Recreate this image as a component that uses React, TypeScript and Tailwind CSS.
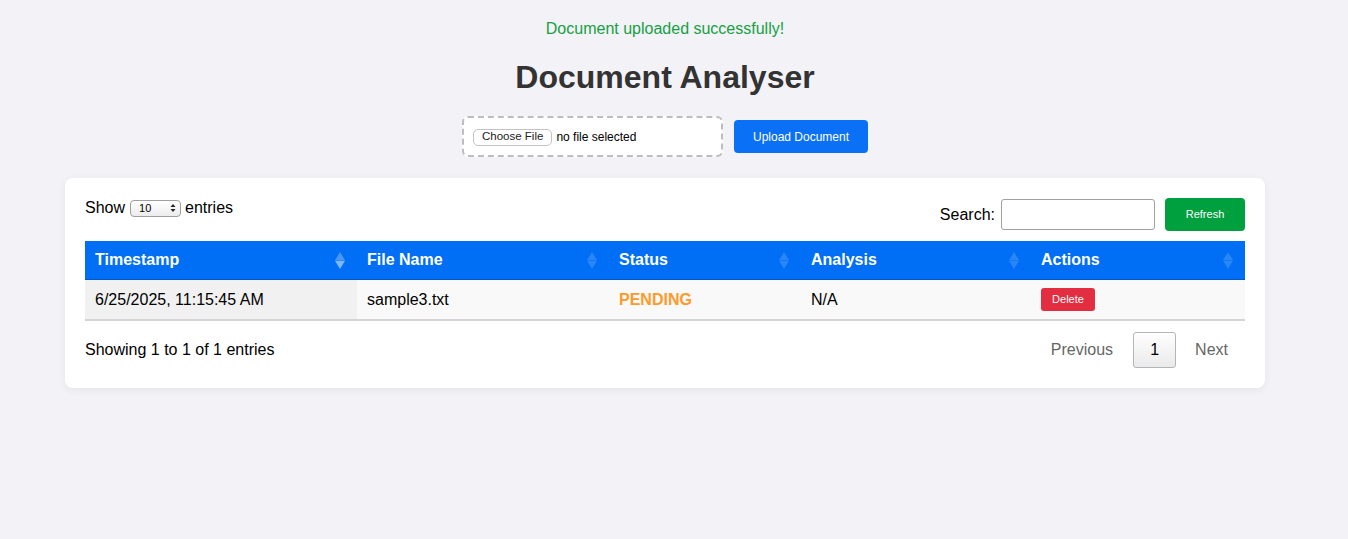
import React from "react";

const columns = [
  { label: "Timestamp", width: "w-[272px]", sorted: true },
  { label: "File Name", width: "w-[252px]", sorted: false },
  { label: "Status", width: "w-[192px]", sorted: false },
  { label: "Analysis", width: "w-[230px]", sorted: false },
  { label: "Actions", width: "w-[214px]", sorted: false },
];

const SortIcon = ({ sorted }: { sorted: boolean }) => (
  <svg width="10" height="17" viewBox="0 0 10 17" className="shrink-0">
    <path d="M5 0 L10 8.3 L0 8.3 Z" fill="#ffffff" fillOpacity={sorted ? 0.28 : 0.16} />
    <path d="M0 8.7 L10 8.7 L5 17 Z" fill="#ffffff" fillOpacity={sorted ? 0.5 : 0.16} />
  </svg>
);

const App = () => {
  return (
    <div className="min-h-screen bg-[#f2f2f7] font-['Liberation_Sans',Arial,sans-serif] text-black">
      <div className="w-[1330px] flex flex-col items-center">
        {/* Message */}
        <p className="mt-[20px] text-[16px] leading-[18px] text-[#16a043]">
          Document uploaded successfully!
        </p>

        <h1 className="mt-[21px] text-[32px] leading-[37px] font-bold text-[#333333]">
          Document Analyser
        </h1>

        {/* Upload */}
        <div className="mt-[20px] flex items-center gap-[11px]">
          <div className="w-[261px] h-[41px] bg-white border-2 border-dashed border-[#bdbdbd] rounded-[6px] flex items-center pl-[9px] gap-[4px] pt-[1px]">
            <button className="h-[17px] px-[8px] text-[11.5px] leading-none text-[#222] bg-white border border-[#c4c4c4] rounded-[5px]">
              Choose File
            </button>
            <span className="text-[12px] text-black">no file selected</span>
          </div>
          <button className="w-[134px] h-[33px] bg-[#0a70f5] text-white text-[12px] rounded-[4px] pt-[1px]">
            Upload Document
          </button>
        </div>

        {/* Card */}
        <div className="mt-[21px] w-[1200px] bg-white rounded-[8px] shadow-[0_2px_8px_rgba(0,0,0,0.06)] px-[20px] pt-[20px] pb-[20px]">
          <div className="flex justify-between items-start">
            <div className="flex items-center gap-[4px] text-[16px] leading-[18px] pt-[1px]">
              <span>Show</span>
              <div className="ml-[1px] w-[51px] h-[17px] border border-[#9e9e9e] rounded-[4px] bg-gradient-to-b from-white to-[#ececec] flex items-center justify-between pl-[8px] pr-[4px]">
                <span className="text-[11px] leading-none">10</span>
                <svg width="6" height="10" viewBox="0 0 6 10">
                  <path d="M3 1 L5.5 4 L0.5 4 Z" fill="#222" />
                  <path d="M0.5 6 L5.5 6 L3 9 Z" fill="#222" />
                </svg>
              </div>
              <span>entries</span>
            </div>
            <div className="flex items-center">
              <span className="text-[16px]">Search:</span>
              <input className="ml-[6px] w-[154px] h-[31px] border border-[#a0a0a0] rounded-[3px] outline-none" />
              <button className="ml-[10px] w-[80px] h-[33px] bg-[#00a03f] text-white text-[11px] rounded-[4px]">
                Refresh
              </button>
            </div>
          </div>

          {/* Table */}
          <div className="mt-[10px]">
            <div className="flex h-[39px] bg-[#006ff5] border-b border-[#0058c8]">
              {columns.map((c) => (
                <div
                  key={c.label}
                  className={`${c.width} flex items-center justify-between pl-[10px] pr-[12px] text-white font-bold text-[16px]`}
                >
                  <span>{c.label}</span>
                  <SortIcon sorted={c.sorted} />
                </div>
              ))}
            </div>
            <div className="flex h-[41px] bg-[#f9f9f9] border-b-2 border-[#d4d4d4] text-[16px]">
              <div className="w-[272px] bg-[#f1f1f1] flex items-center pl-[10px]">6/25/2025, 11:15:45 AM</div>
              <div className="w-[252px] flex items-center pl-[10px]">sample3.txt</div>
              <div className="w-[192px] flex items-center pl-[10px] font-bold text-[#ff9a2a]">PENDING</div>
              <div className="w-[230px] flex items-center pl-[10px]">N/A</div>
              <div className="w-[214px] flex items-center pl-[10px]">
                <button className="w-[54px] h-[23px] bg-[#e32d40] text-white text-[11px] rounded-[3px]">
                  Delete
                </button>
              </div>
            </div>
          </div>

          {/* Footer */}
          <div className="mt-[11px] flex items-center justify-between h-[36px]">
            <span className="text-[16px]">Showing 1 to 1 of 1 entries</span>
            <div className="flex items-center text-[16px]">
              <span className="px-[16px] text-[#666666]">Previous</span>
              <span className="ml-[4px] w-[43px] h-[36px] flex items-center justify-center border border-[#b5b5b5] rounded-[3px] bg-gradient-to-b from-white to-[#eaeaea] text-black">
                1
              </span>
              <span className="ml-[3px] pl-[16px] pr-[17px] text-[#666666]">Next</span>
            </div>
          </div>
        </div>
      </div>
    </div>
  );
};

export default App;
